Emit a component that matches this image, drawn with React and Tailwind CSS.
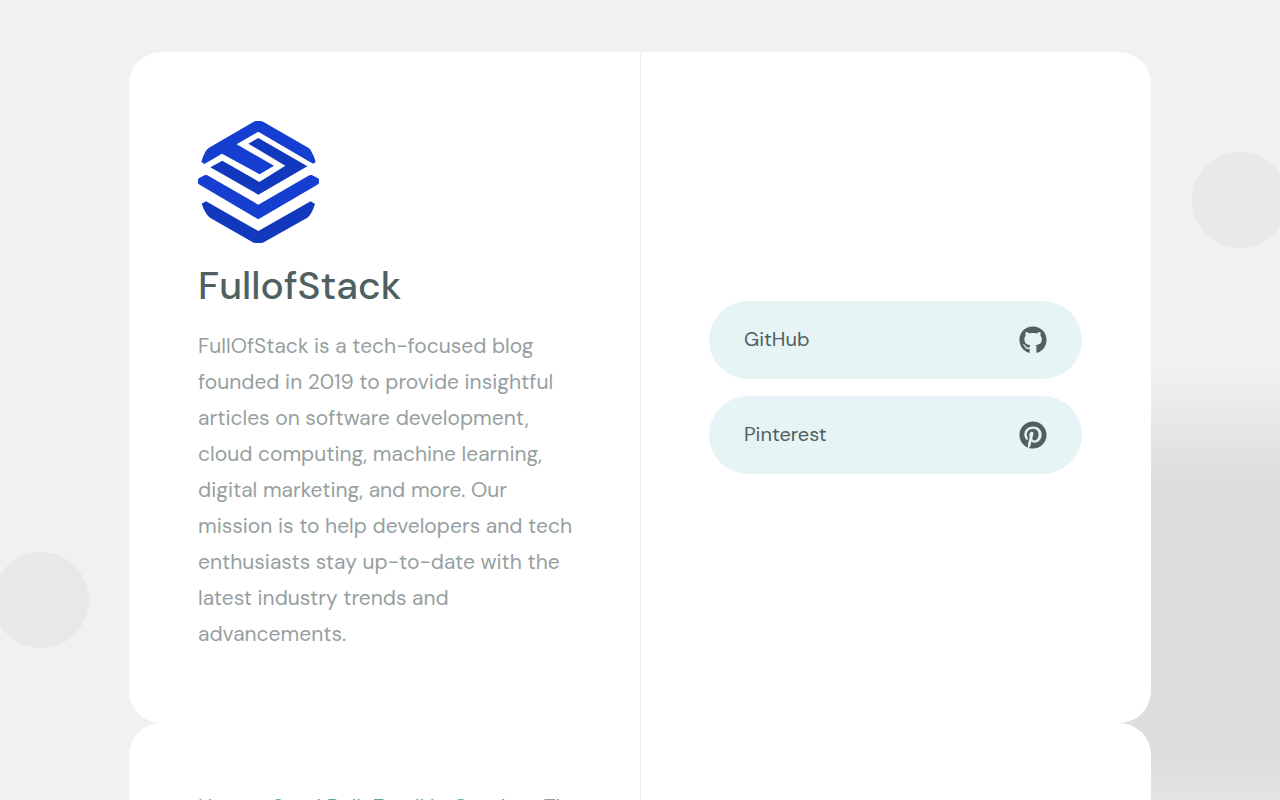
import React from "react";
import { FaGithub, FaPinterest } from "react-icons/fa";

const links = [
  { name: "GitHub", url: "https://github.com/fullofstack", icon: FaGithub },
  { name: "Pinterest", url: "https://www.pinterest.com/fullofstack", icon: FaPinterest },
];

const Logo = () => (
  <svg
    viewBox="24 27 363 366"
    className="w-[121px] h-[122px]"
    role="img"
    aria-label="FullofStack logo"
  >
    <path
      fill="#163fd2"
      d="M190 30Q193 27 200 27H210Q217 27 222 31L356 108Q361 111 364 118Q373 134 377 150L369 155L205 59L140 97L252 161L209 187L96 125L43 156L34 150Q38 132 48 116Q51 111 57 107Z"
    />
    <path
      fill="#1238bd"
      d="M175 95L205 78L352 163L205 248L61 166L97 146L208 210L286 161Z"
    />
    <path
      fill="#163fd2"
      d="M24 212V203Q24 200 28 198L45 189Q48 188 52 190L205 278L358 190Q362 188 365 189L383 198Q387 200 387 204V212Q387 215 382 218L205 322L29 218Q24 215 24 212Z"
    />
    <path
      fill="#1238bd"
      d="M35 275L48 268L205 357L362 268L375 276Q371 291 362 306Q358 313 352 317L224 389Q219 393 212 393H198Q192 393 187 390L60 317Q54 313 50 307Q40 292 35 275Z"
    />
  </svg>
);

const Backdrop = () => (
  <div className="absolute inset-0 overflow-hidden" aria-hidden="true">
    <div className="absolute right-0 top-[370px] w-1/2">
      <div className="h-[110px] bg-linear-to-b from-[#f1f1f1] to-[#dddddd]" />
      <div className="h-[280px] bg-[#dddddd]" />
      <div className="h-[110px] bg-linear-to-b from-[#dddddd] to-[#f1f1f1]" />
    </div>
    <div className="absolute -right-2 top-[152px] size-24 rounded-full bg-[#e8e8e8]" />
    <div className="absolute -left-[7px] top-[552px] size-24 rounded-full bg-[#e8e8e8]" />
  </div>
);

const App = () => {
  return (
    <div className="relative min-h-screen bg-[#f1f1f1] font-['DM_Sans','Inter',sans-serif] text-[#505f5f]">
      <Backdrop />

      <main className="relative mx-auto w-4/5 px-px pt-[52px]">
        <section className="grid grid-cols-2 rounded-[32px] bg-white">
          <div className="pl-[69px] pr-[60px] pt-[69px] pb-[71px]">
            <Logo />
            <h1 className="mt-4 text-[39px] leading-[54px] font-medium">FullofStack</h1>
            <p className="mt-[15px] text-[21px] leading-9 text-[#969f9f]">
              FullOfStack is a tech-focused blog founded in 2019 to provide insightful
              articles on software development, cloud computing, machine learning,
              digital marketing, and more. Our mission is to help developers and tech
              enthusiasts stay up-to-date with the latest industry trends and
              advancements.
            </p>
          </div>

          <div className="flex flex-col justify-center gap-[17px] border-l border-[#f0f0f0] pl-[68px] pr-[69px]">
            {links.map(({ name, url, icon: Icon }) => (
              <a
                key={name}
                href={url}
                className="flex h-[78px] items-center justify-between rounded-full bg-[#e6f4f5] px-[35px] text-[20px]"
              >
                <span className="pb-0.5">{name}</span>
                <Icon className="size-7" />
              </a>
            ))}
          </div>
        </section>

        <section className="grid grid-cols-2 rounded-[32px] bg-white">
          <div className="pl-[69px] pr-[60px] pt-[66px] pb-[71px]">
            <p className="text-[21px] leading-9 text-[#969f9f]">
              How to <a href="#post" className="text-[#5fa9a4]">Send Bulk Email in October</a>: The
            </p>
          </div>
          <div className="border-l border-[#f0f0f0]" />
        </section>
      </main>
    </div>
  );
};

export default App;
